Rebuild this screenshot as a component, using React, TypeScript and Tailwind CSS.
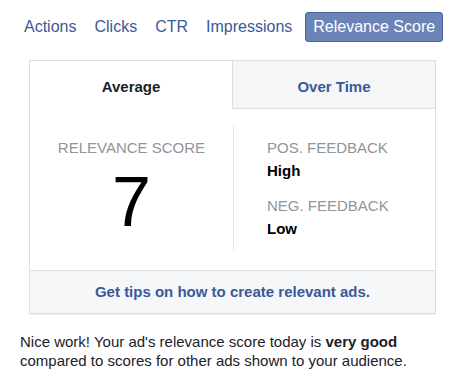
export default function App() {
  const tabs = ["Actions", "Clicks", "CTR", "Impressions"];
  return (
    <div className="min-h-[389px] w-[474px] bg-white font-['Liberation_Sans',Arial,sans-serif] text-[#1d2129]">
      <div className="flex items-center gap-[18px] pl-[24px] pt-[12px] text-[16px] text-[#3b5998]">
        {tabs.map((t) => (
          <span key={t}>{t}</span>
        ))}
        <span className="-ml-[5px] flex h-[30px] items-center rounded-[3px] border border-[#4a64a0] bg-[#6b84b8] px-[7px] text-white">
          Relevance Score
        </span>
      </div>

      <div className="ml-[29px] mt-[18px] w-[407px] border border-[#dddfe2] shadow-[0_1px_1px_rgba(0,0,0,0.06)]">
        <div className="flex h-[48px] text-[15px] font-bold">
          <div className="flex flex-1 items-center justify-center bg-white pt-[5px] text-[#1d2129]">Average</div>
          <div className="flex flex-1 items-center justify-center border-b border-l border-[#dddfe2] bg-[#f5f6f7] pt-[5px] text-[#3b5998]">
            Over Time
          </div>
        </div>
        <div className="flex h-[161px] items-start">
          <div className="flex w-[203px] flex-col items-center pt-[30px]">
            <div className="text-[15px] leading-[18px] text-[#90949c]">RELEVANCE SCORE</div>
            <div className="mt-[10px] text-[70px] leading-[70px] text-black">7</div>
          </div>
          <div className="mt-[17px] h-[125px] w-px bg-[#e5e6e9]" />
          <div className="flex flex-col pl-[33px] pt-[30px] text-[15px] leading-[18px]">
            <div className="text-[#90949c]">POS. FEEDBACK</div>
            <div className="mt-[5px] font-bold text-black">High</div>
            <div className="mt-[17px] text-[#90949c]">NEG. FEEDBACK</div>
            <div className="mt-[5px] font-bold text-black">Low</div>
          </div>
        </div>
        <div className="flex h-[43px] items-center justify-center border-t border-[#dddfe2] bg-[#f6f7f9] text-[15px] font-bold text-[#3b5998]">
          Get tips on how to create relevant ads.
        </div>
      </div>

      <p className="ml-[20px] mt-[18px] text-[15px] leading-[19px] text-[#1d2129]">
        Nice work! Your ad's relevance score today is <b>very good</b>
        <br />
        compared to scores for other ads shown to your audience.
      </p>
    </div>
  );
}
